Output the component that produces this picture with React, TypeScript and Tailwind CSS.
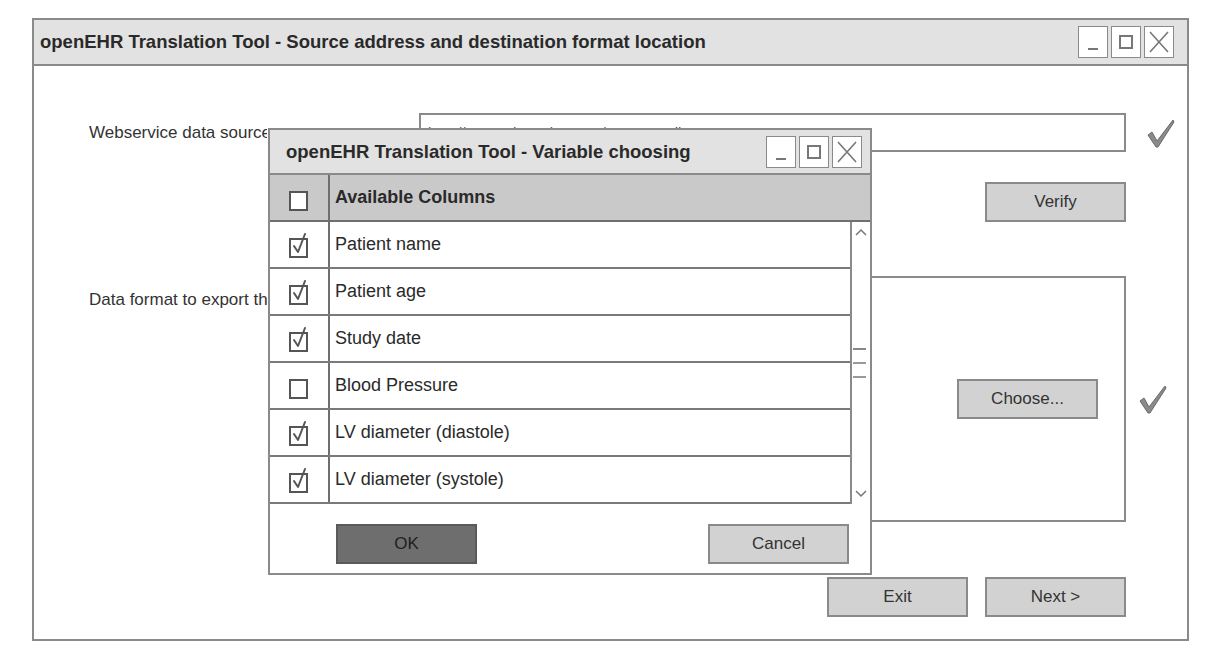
import React from "react";

const font = { fontFamily: '"Liberation Sans", Arial, sans-serif' };

function WinButtons() {
  return (
    <div className="flex gap-[3px]">
      <div className="w-[30px] h-[32px] bg-white border border-[#8a8a8a] flex items-end justify-center pb-[7px]">
        <div className="w-[10px] h-[2px] bg-[#777]" />
      </div>
      <div className="w-[30px] h-[32px] bg-white border border-[#8a8a8a] flex items-center justify-center">
        <div className="w-[14px] h-[14px] border-2 border-[#777]" />
      </div>
      <div className="w-[30px] h-[32px] bg-white border border-[#8a8a8a] flex items-center justify-center">
        <svg width="22" height="24" viewBox="0 0 22 24">
          <path d="M2 2 L20 22 M20 2 L2 22" stroke="#777" strokeWidth="1.6" fill="none" />
        </svg>
      </div>
    </div>
  );
}

function BigCheck() {
  return (
    <svg width="30" height="34" viewBox="0 0 30 34">
      <path
        d="M2 19 L6 16 L11 25 L27 4 L28 6 L12 31 L10 31 Z"
        fill="#8a8a8a"
        stroke="#6a6a6a"
        strokeWidth="1"
        strokeLinejoin="round"
      />
    </svg>
  );
}

function Checkbox({ checked }: { checked: boolean }) {
  return (
    <svg width="26" height="30" viewBox="0 0 26 30">
      <rect x="4" y="9" width="17" height="18" fill="white" stroke="#555" strokeWidth="2" />
      {checked && (
        <path
          d="M8 16 L12 22 L19 4"
          stroke="#555"
          strokeWidth="2"
          fill="none"
          strokeLinecap="round"
          strokeLinejoin="round"
        />
      )}
    </svg>
  );
}

function GrayButton({ label, className = "" }: { label: string; className?: string }) {
  return (
    <div
      className={`w-[141px] h-[40px] bg-[#d2d2d2] border-2 border-[#8a8a8a] flex items-center justify-center text-[17px] text-[#333] ${className}`}
    >
      {label}
    </div>
  );
}

const rows = [
  { label: "Patient name", checked: true },
  { label: "Patient age", checked: true },
  { label: "Study date", checked: true },
  { label: "Blood Pressure", checked: false },
  { label: "LV diameter (diastole)", checked: true },
  { label: "LV diameter (systole)", checked: true },
];

function Dialog() {
  return (
    <div className="absolute left-[234px] top-[108px] w-[604px] h-[447px] bg-white border-2 border-[#8a8a8a] flex flex-col">
      <div className="h-[45px] bg-[#e2e2e2] border-b-2 border-[#8a8a8a] flex items-center justify-between pl-[16px] pr-[8px]">
        <span className="font-bold text-[18.5px] text-[#2a2a2a]">openEHR Translation Tool - Variable choosing</span>
        <WinButtons />
      </div>
      <div className="h-[47px] bg-[#c9c9c9] border-b-2 border-[#6f6f6f] flex">
        <div className="w-[60px] border-r-2 border-[#6f6f6f] flex items-center justify-center">
          <Checkbox checked={false} />
        </div>
        <div className="flex items-center pl-[5px] font-bold text-[18px] text-[#2a2a2a]">Available Columns</div>
      </div>
      <div className="flex">
        <div className="flex-1 flex flex-col">
          {rows.map((r) => (
            <div key={r.label} className="h-[47px] border-b-2 border-[#7a7a7a] flex">
              <div className="w-[60px] border-r-2 border-[#6f6f6f] flex items-center justify-center">
                <Checkbox checked={r.checked} />
              </div>
              <div className="flex items-center pl-[5px] text-[18px] text-[#2a2a2a]">{r.label}</div>
            </div>
          ))}
        </div>
        <div className="w-[20px] border-l-2 border-[#8a8a8a] flex flex-col items-center justify-between py-[6px]">
          <svg width="12" height="8" viewBox="0 0 12 8">
            <path d="M1 7 L6 2 L11 7" stroke="#777" strokeWidth="1.5" fill="none" />
          </svg>
          <div className="flex flex-col gap-[12px] w-full items-start pl-[1px]">
            <div className="w-[13px] h-[2px] bg-[#888]" />
            <div className="w-[13px] h-[2px] bg-[#999]" />
            <div className="w-[13px] h-[2px] bg-[#999]" />
          </div>
          <svg width="12" height="8" viewBox="0 0 12 8">
            <path d="M1 1 L6 6 L11 1" stroke="#777" strokeWidth="1.5" fill="none" />
          </svg>
        </div>
      </div>
      <div className="flex-1 flex items-start justify-between pl-[66px] pr-[21px] pt-[20px]">
        <div className="w-[141px] h-[40px] bg-[#6e6e6e] border-2 border-[#5a5a5a] flex items-center justify-center text-[17px] text-[#1f1f1f]">
          OK
        </div>
        <GrayButton label="Cancel" />
      </div>
    </div>
  );
}

export default function App() {
  return (
    <div className="w-full min-h-screen bg-white pt-[18px] pl-[32px]" style={font}>
      <div className="relative w-[1157px] h-[623px] border-2 border-[#8a8a8a] flex flex-col">
        <div className="h-[46px] bg-[#e2e2e2] border-b-2 border-[#8a8a8a] flex items-center justify-between pl-[6px] pr-[13px]">
          <span className="font-bold text-[18.5px] text-[#2a2a2a]">
            openEHR Translation Tool - Source address and destination format location
          </span>
          <WinButtons />
        </div>
        <div className="flex flex-col pl-[55px]">
          <div className="flex items-center mt-[47px]">
            <div className="w-[330px] text-[17px] text-[#333]">
              <div className="w-[178px] overflow-hidden whitespace-nowrap">Webservice data source address:</div>
            </div>
            <div className="w-[707px] h-[39px] border-2 border-[#8a8a8a] flex items-start pl-[7px] pt-[7px] text-[15px] text-[#555]">
              http://test.webservice.com/export.wsdl
            </div>
            <div className="ml-[20px]">
              <BigCheck />
            </div>
          </div>
          <div className="flex mt-[30px] w-[1037px] justify-end">
            <GrayButton label="Verify" />
          </div>
          <div className="flex mt-[54px]">
            <div className="w-[330px] pt-[11px] text-[17px] text-[#333]">
              <div className="w-[178px] overflow-hidden whitespace-nowrap">Data format to export the variables:</div>
            </div>
            <div className="w-[707px] h-[246px] border-2 border-[#8a8a8a] flex items-center justify-end pr-[26px]">
              <GrayButton label="Choose..." />
            </div>
            <div className="ml-[12px] flex items-center">
              <BigCheck />
            </div>
          </div>
          <div className="flex mt-[55px] w-[1037px] justify-end gap-[17px]">
            <GrayButton label="Exit" />
            <GrayButton label="Next >" />
          </div>
        </div>
        <Dialog />
      </div>
    </div>
  );
}
